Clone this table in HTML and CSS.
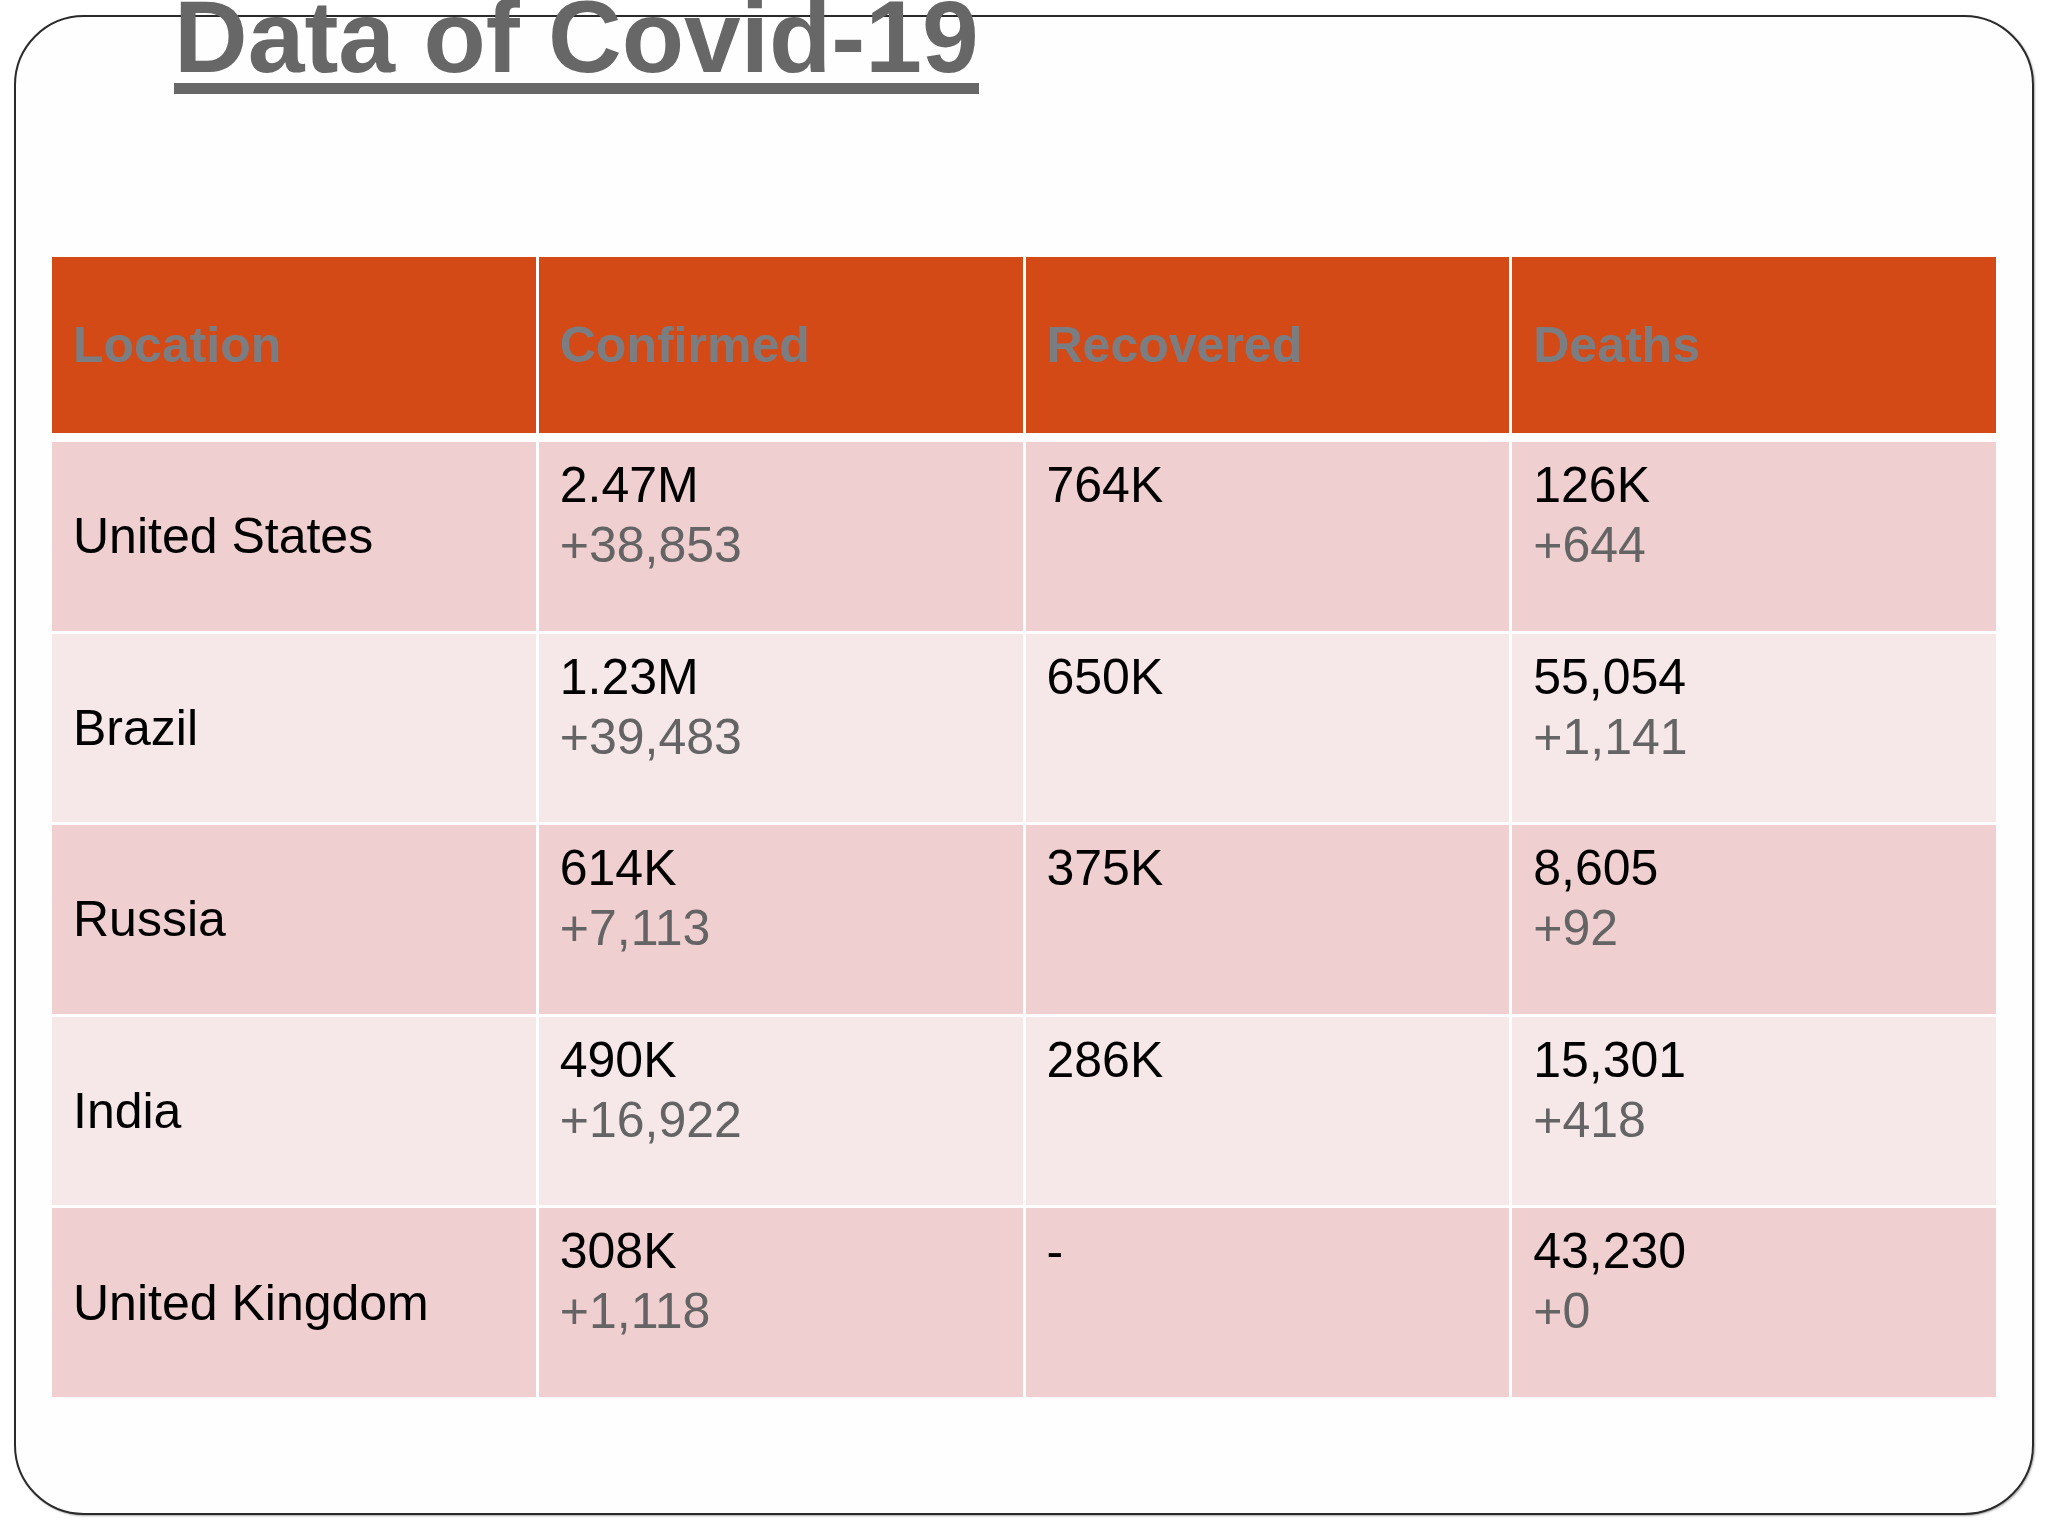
FILE: index.html
```html
<!DOCTYPE html>
<html lang="en">
<head>
<meta charset="utf-8">
<title>Data of Covid-19</title>
<link rel="stylesheet" href="styles.css">
</head>
<body>
<div class="slide">
  <div class="title"><h1 class="title-text">Data of Covid-19</h1></div>
  <div class="table">
    <div class="cell head">Location</div>
    <div class="cell head">Confirmed</div>
    <div class="cell head">Recovered</div>
    <div class="cell head">Deaths</div>

    <div class="cell odd loc">United States</div>
    <div class="cell odd"><span class="v">2.47M</span><span class="d">+38,853</span></div>
    <div class="cell odd"><span class="v">764K</span></div>
    <div class="cell odd"><span class="v">126K</span><span class="d">+644</span></div>

    <div class="cell even loc">Brazil</div>
    <div class="cell even"><span class="v">1.23M</span><span class="d">+39,483</span></div>
    <div class="cell even"><span class="v">650K</span></div>
    <div class="cell even"><span class="v">55,054</span><span class="d">+1,141</span></div>

    <div class="cell odd loc">Russia</div>
    <div class="cell odd"><span class="v">614K</span><span class="d">+7,113</span></div>
    <div class="cell odd"><span class="v">375K</span></div>
    <div class="cell odd"><span class="v">8,605</span><span class="d">+92</span></div>

    <div class="cell even loc">India</div>
    <div class="cell even"><span class="v">490K</span><span class="d">+16,922</span></div>
    <div class="cell even"><span class="v">286K</span></div>
    <div class="cell even"><span class="v">15,301</span><span class="d">+418</span></div>

    <div class="cell odd loc">United Kingdom</div>
    <div class="cell odd"><span class="v">308K</span><span class="d">+1,118</span></div>
    <div class="cell odd"><span class="v">-</span></div>
    <div class="cell odd"><span class="v">43,230</span><span class="d">+0</span></div>
  </div>
</div>
</body>
</html>
```

FILE: styles.css
```css
html, body {
  margin: 0;
  padding: 0;
  background: #ffffff;
}

body {
  font-family: "Liberation Sans", Arial, sans-serif;
  width: 2048px;
  height: 1536px;
  overflow: hidden;
}

.slide {
  box-sizing: border-box;
  margin: 15px 0 0 14px;
  width: 2020px;
  height: 1500px;
  border: 2px solid #2a2a2a;
  border-radius: 70px;
  background: #fefefe;
  box-shadow: 1px 1px 2px rgba(0, 0, 0, 0.35);
}

.title {
  display: flex;
  margin: -25px 0 0 158px;
}

.title-text {
  margin: 0;
  font-size: 102px;
  line-height: 91px;
  font-weight: 700;
  color: #676767;
  border-bottom: 11px solid #676767;
  white-space: nowrap;
}

.table {
  display: grid;
  grid-template-columns: repeat(4, 1fr);
  grid-template-rows: auto repeat(5, 188.6px);
  column-gap: 3px;
  row-gap: 3px;
  width: 1944px;
  margin: 163px 0 0 36px;
}

.cell {
  box-sizing: border-box;
  display: flex;
  flex-direction: column;
  padding: 13px 18px 0 21px;
  font-size: 50px;
  line-height: 60px;
  color: #000000;
}

.head {
  height: 176px;
  margin-bottom: 6px;
  padding-top: 0;
  justify-content: center;
  background: #d34a17;
  color: #7a7e82;
  font-weight: 700;
}

.odd {
  background: #efcfcf;
}

.even {
  background: #f6e8e8;
}

.loc {
  justify-content: center;
  padding-top: 0;
}

.v {
  color: #000000;
}

.d {
  color: #646464;
}
```
